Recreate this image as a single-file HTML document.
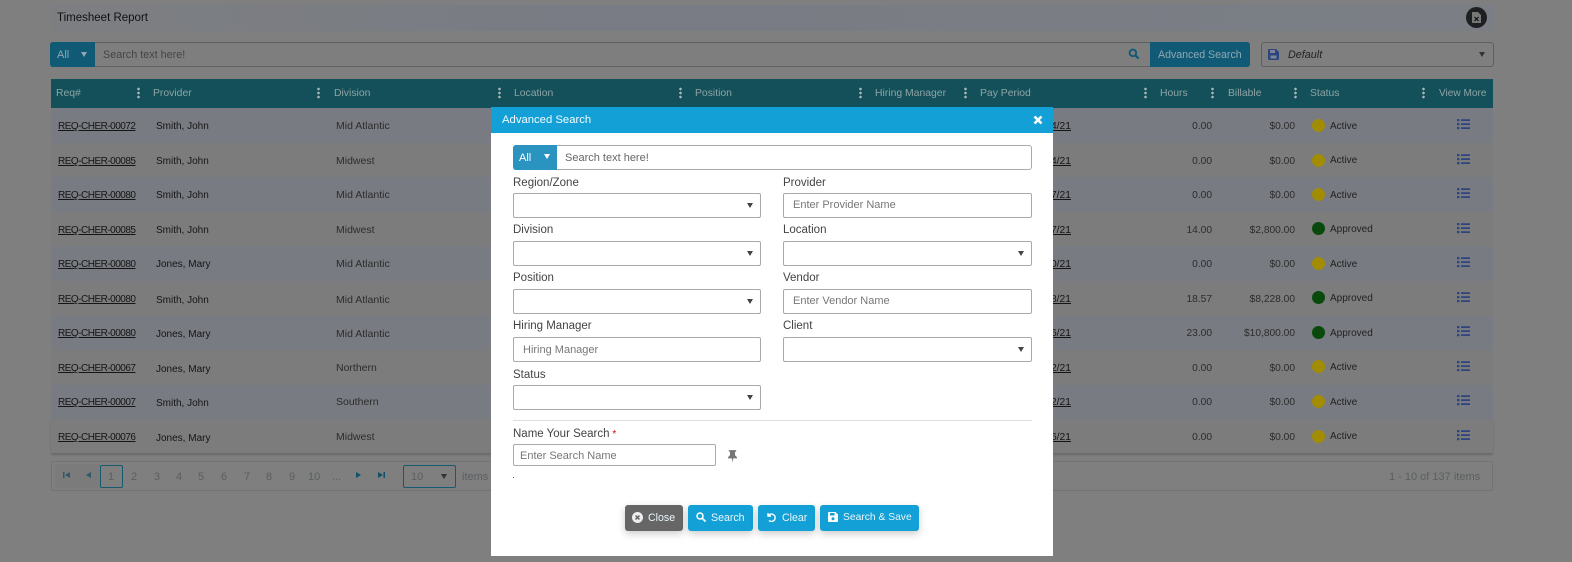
<!DOCTYPE html>
<html><head><meta charset="utf-8"><style>
html,body{margin:0;padding:0}
body{width:1572px;height:562px;position:relative;overflow:hidden;background:#7f7f7f;font-family:"Liberation Sans",sans-serif;font-size:10px;color:#111}
div,span,a,svg{position:absolute;box-sizing:border-box}
.t{white-space:nowrap;line-height:14px;margin-top:1px}
.row{left:51px;width:1442px;height:35px}
.h{color:#8ea4a6;font-size:10.4px;top:86px}
.d{width:3px;height:12px;top:87px;background:radial-gradient(circle,#a9baba 1.2px,transparent 1.4px) 0 0/3px 4px}
.r,.p,.v,.dt,.n,.b{margin-top:2px}
.r{text-decoration:underline;left:58px;letter-spacing:-.5px;color:#151515}
.p{left:156px;font-size:10px;color:#151515}
.v{left:336px;font-size:10.5px;color:#2c2c2c}
.dt{right:501px;text-decoration:underline;color:#151515;font-size:10.3px}
.n{right:360px;color:#2c2c2c;font-size:10.2px}
.b{right:277px;color:#2c2c2c;font-size:10.2px}
.c{left:1312px;width:13px;height:13px;border-radius:50%;background:#a28c03}
.g{background:#094a0c}
.s{left:1330px;font-size:10px;color:#222;margin-top:2px}
.l{left:1457px;width:13px;height:12px}
.lab{font-size:11.5px;color:#444}
.sel,.inp{background:#fff;border:1px solid #aaa;border-radius:2px;height:25px}
.sel{width:248px}
.sel:after{content:"";position:absolute;right:7px;top:9px;border-left:3.5px solid transparent;border-right:3.5px solid transparent;border-top:5px solid #444}
.ph{font-size:11px;color:#777;left:9px;top:5px;line-height:15px;white-space:nowrap}
.btn{top:505px;height:26px;border-radius:3px;background:#12a0d6;color:#e8f6fb;font-size:10.6px;line-height:26px;box-shadow:0 3px 8px rgba(0,0,0,.2);white-space:nowrap}
.pg{top:470px;color:#5a5f60;font-size:11px;line-height:14px}
</style></head><body>
<div style="left:51px;top:5px;width:1442px;height:26px;background:linear-gradient(90deg,#7c7e81,#797c84 40%,#7b7e85);"></div>
<div class="t" style="left:57px;top:10px;font-size:11.5px;color:#111">Timesheet Report</div>
<div style="left:1466px;top:7px;width:21px;height:21px;border-radius:50%;background:#1d1f20"></div>
<svg style="left:1472px;top:12px" width="9" height="11" viewBox="0 0 9 11"><path d="M0 0h6l3 3v8H0z" fill="#777"/><path d="M2.500 5l4 4M6.500 5l-4 4" stroke="#111" stroke-width="1.200"/></svg>

<div style="left:50px;top:42px;width:1200px;height:25px;border:1px solid #606060;border-radius:3px;background:#7e7e7e"></div>
<div style="left:50px;top:42px;width:45px;height:25px;background:#105a76;border-radius:3px 0 0 3px"></div>
<div class="t" style="left:57px;top:47px;font-size:11px;color:#8fa8b2">All</div>
<div style="left:81px;top:52px;border-left:3.5px solid transparent;border-right:3.5px solid transparent;border-top:5px solid #8fa8b2"></div>
<div class="t" style="left:103px;top:47px;font-size:10.8px;color:#454545">Search text here!</div>
<svg style="left:1128px;top:48px" width="12" height="12" viewBox="0 0 13 13"><circle cx="5.300" cy="5.300" r="3.600" fill="none" stroke="#105a76" stroke-width="2"/><path d="M8 8l3.400 3.400" stroke="#105a76" stroke-width="2.400"/></svg>
<div style="left:1150px;top:42px;width:100px;height:25px;background:#105a76;border-radius:0 3px 3px 0"></div>
<div class="t" style="left:1158px;top:47px;font-size:10.6px;color:#8fa8b2">Advanced Search</div>
<div style="left:1261px;top:42px;width:233px;height:25px;border:1px solid #5f5f5f;border-radius:3px"></div>
<svg style="left:1268px;top:49px" width="11" height="11" viewBox="0 0 11 11"><path d="M0 1.500A1.500 1.500 0 0 1 1.500 0H8l3 3v6.500A1.500 1.500 0 0 1 9.500 11h-8A1.500 1.500 0 0 1 0 9.500z" fill="#2c4580"/><rect x="2" y="1" width="5" height="3" fill="#7f8595"/><rect x="2.500" y="6.500" width="6" height="3" fill="#7f8595"/></svg>
<div class="t" style="left:1288px;top:47px;font-size:10.8px;font-style:italic;color:#222">Default</div>
<div style="left:1479px;top:52px;border-left:3.5px solid transparent;border-right:3.5px solid transparent;border-top:5px solid #333"></div>

<div style="left:51px;top:79px;width:1442px;height:29px;background:#145059"></div>
<div class="t h" style="left:56px">Req#</div><div class="d" style="left:137px"></div>
<div class="t h" style="left:153px">Provider</div><div class="d" style="left:317px"></div>
<div class="t h" style="left:334px">Division</div><div class="d" style="left:498px"></div>
<div class="t h" style="left:514px">Location</div><div class="d" style="left:679px"></div>
<div class="t h" style="left:695px">Position</div><div class="d" style="left:859px"></div>
<div class="t h" style="left:875px">Hiring Manager</div><div class="d" style="left:964px"></div>
<div class="t h" style="left:980px">Pay Period</div><div class="d" style="left:1144px"></div>
<div class="t h" style="left:1160px">Hours</div><div class="d" style="left:1211px"></div>
<div class="t h" style="left:1228px">Billable</div><div class="d" style="left:1294px"></div>
<div class="t h" style="left:1310px">Status</div><div class="d" style="left:1422px"></div>
<div class="t h" style="left:1439px;font-size:10.100px">View More</div>

<div class="row" style="top:108px;background:#797b82"></div>
<div class="row" style="top:143px;background:#7c7c7c"></div>
<div class="row" style="top:177px;background:#797b82"></div>
<div class="row" style="top:212px;background:#7c7c7c"></div>
<div class="row" style="top:246px;background:#797b82"></div>
<div class="row" style="top:281px;background:#7c7c7c"></div>
<div class="row" style="top:316px;background:#797b82"></div>
<div class="row" style="top:350px;background:#7c7c7c"></div>
<div class="row" style="top:385px;background:#797b82"></div>
<div class="row" style="top:419px;height:34px;background:#7c7c7c;box-shadow:0 2px 2px rgba(0,0,0,.18)"></div>

<a class="t r" style="top:118px">REQ-CHER-00072</a><span class="t p" style="top:118px">Smith, John</span><span class="t v" style="top:117px">Mid Atlantic</span><span class="t dt" style="top:118px">4/21</span><span class="t n" style="top:118px">0.00</span><span class="t b" style="top:118px">$0.00</span><span class="c" style="top:119px"></span><span class="t s" style="top:118px">Active</span>
<a class="t r" style="top:153px">REQ-CHER-00085</a><span class="t p" style="top:153px">Smith, John</span><span class="t v" style="top:152px">Midwest</span><span class="t dt" style="top:153px">4/21</span><span class="t n" style="top:153px">0.00</span><span class="t b" style="top:153px">$0.00</span><span class="c" style="top:154px"></span><span class="t s" style="top:152px">Active</span>
<a class="t r" style="top:187px">REQ-CHER-00080</a><span class="t p" style="top:187px">Smith, John</span><span class="t v" style="top:186px">Mid Atlantic</span><span class="t dt" style="top:187px">7/21</span><span class="t n" style="top:187px">0.00</span><span class="t b" style="top:187px">$0.00</span><span class="c" style="top:188px"></span><span class="t s" style="top:187px">Active</span>
<a class="t r" style="top:222px">REQ-CHER-00085</a><span class="t p" style="top:222px">Smith, John</span><span class="t v" style="top:221px">Midwest</span><span class="t dt" style="top:222px">7/21</span><span class="t n" style="top:222px">14.00</span><span class="t b" style="top:222px">$2,800.00</span><span class="c g" style="top:222px"></span><span class="t s" style="top:221px">Approved</span>
<a class="t r" style="top:256px">REQ-CHER-00080</a><span class="t p" style="top:256px">Jones, Mary</span><span class="t v" style="top:255px">Mid Atlantic</span><span class="t dt" style="top:256px">0/21</span><span class="t n" style="top:256px">0.00</span><span class="t b" style="top:256px">$0.00</span><span class="c" style="top:257px"></span><span class="t s" style="top:256px">Active</span>
<a class="t r" style="top:291px">REQ-CHER-00080</a><span class="t p" style="top:292px">Smith, John</span><span class="t v" style="top:291px">Mid Atlantic</span><span class="t dt" style="top:291px">8/21</span><span class="t n" style="top:291px">18.57</span><span class="t b" style="top:291px">$8,228.00</span><span class="c g" style="top:291px"></span><span class="t s" style="top:290px">Approved</span>
<a class="t r" style="top:325px">REQ-CHER-00080</a><span class="t p" style="top:326px">Jones, Mary</span><span class="t v" style="top:325px">Mid Atlantic</span><span class="t dt" style="top:325px">6/21</span><span class="t n" style="top:325px">23.00</span><span class="t b" style="top:325px">$10,800.00</span><span class="c g" style="top:326px"></span><span class="t s" style="top:325px">Approved</span>
<a class="t r" style="top:360px">REQ-CHER-00067</a><span class="t p" style="top:361px">Jones, Mary</span><span class="t v" style="top:359px">Northern</span><span class="t dt" style="top:360px">2/21</span><span class="t n" style="top:360px">0.00</span><span class="t b" style="top:360px">$0.00</span><span class="c" style="top:360px"></span><span class="t s" style="top:359px">Active</span>
<a class="t r" style="top:394px">REQ-CHER-00007</a><span class="t p" style="top:395px">Smith, John</span><span class="t v" style="top:393px">Southern</span><span class="t dt" style="top:394px">2/21</span><span class="t n" style="top:394px">0.00</span><span class="t b" style="top:394px">$0.00</span><span class="c" style="top:395px"></span><span class="t s" style="top:394px">Active</span>
<a class="t r" style="top:429px">REQ-CHER-00076</a><span class="t p" style="top:430px">Jones, Mary</span><span class="t v" style="top:428px">Midwest</span><span class="t dt" style="top:429px">6/21</span><span class="t n" style="top:429px">0.00</span><span class="t b" style="top:429px">$0.00</span><span class="c" style="top:430px"></span><span class="t s" style="top:428px">Active</span>

<svg class="l" style="top:118px" viewBox="0 0 13 12"><path d="M0 1h2.400v2.200H0zM0 5h2.400v2.200H0zM0 9h2.400v2.200H0zM4 1.200h9v1.800H4zM4 5.200h9v1.800H4zM4 9.200h9v1.800H4z" fill="#2c4580"/></svg>
<svg class="l" style="top:153px" viewBox="0 0 13 12"><path d="M0 1h2.400v2.200H0zM0 5h2.400v2.200H0zM0 9h2.400v2.200H0zM4 1.200h9v1.800H4zM4 5.200h9v1.800H4zM4 9.200h9v1.800H4z" fill="#2c4580"/></svg>
<svg class="l" style="top:187px" viewBox="0 0 13 12"><path d="M0 1h2.400v2.200H0zM0 5h2.400v2.200H0zM0 9h2.400v2.200H0zM4 1.200h9v1.800H4zM4 5.200h9v1.800H4zM4 9.200h9v1.800H4z" fill="#2c4580"/></svg>
<svg class="l" style="top:222px" viewBox="0 0 13 12"><path d="M0 1h2.400v2.200H0zM0 5h2.400v2.200H0zM0 9h2.400v2.200H0zM4 1.200h9v1.800H4zM4 5.200h9v1.800H4zM4 9.200h9v1.800H4z" fill="#2c4580"/></svg>
<svg class="l" style="top:256px" viewBox="0 0 13 12"><path d="M0 1h2.400v2.200H0zM0 5h2.400v2.200H0zM0 9h2.400v2.200H0zM4 1.200h9v1.800H4zM4 5.200h9v1.800H4zM4 9.200h9v1.800H4z" fill="#2c4580"/></svg>
<svg class="l" style="top:291px" viewBox="0 0 13 12"><path d="M0 1h2.400v2.200H0zM0 5h2.400v2.200H0zM0 9h2.400v2.200H0zM4 1.200h9v1.800H4zM4 5.200h9v1.800H4zM4 9.200h9v1.800H4z" fill="#2c4580"/></svg>
<svg class="l" style="top:325px" viewBox="0 0 13 12"><path d="M0 1h2.400v2.200H0zM0 5h2.400v2.200H0zM0 9h2.400v2.200H0zM4 1.200h9v1.800H4zM4 5.200h9v1.800H4zM4 9.200h9v1.800H4z" fill="#2c4580"/></svg>
<svg class="l" style="top:360px" viewBox="0 0 13 12"><path d="M0 1h2.400v2.200H0zM0 5h2.400v2.200H0zM0 9h2.400v2.200H0zM4 1.200h9v1.800H4zM4 5.200h9v1.800H4zM4 9.200h9v1.800H4z" fill="#2c4580"/></svg>
<svg class="l" style="top:394px" viewBox="0 0 13 12"><path d="M0 1h2.400v2.200H0zM0 5h2.400v2.200H0zM0 9h2.400v2.200H0zM4 1.200h9v1.800H4zM4 5.200h9v1.800H4zM4 9.200h9v1.800H4z" fill="#2c4580"/></svg>
<svg class="l" style="top:429px" viewBox="0 0 13 12"><path d="M0 1h2.400v2.200H0zM0 5h2.400v2.200H0zM0 9h2.400v2.200H0zM4 1.200h9v1.800H4zM4 5.200h9v1.800H4zM4 9.200h9v1.800H4z" fill="#2c4580"/></svg>

<div style="left:51px;top:461px;width:1442px;height:30px;border:1px solid #737373;border-radius:2px"></div>
<div style="left:55px;top:464px;width:45px;height:24px;background:#7b7b7b"></div>
<div style="left:100px;top:465px;width:23px;height:23px;border:1px solid #155a70;border-radius:2px"></div>
<svg style="left:63px;top:472px" width="7" height="6"><path d="M0 0h1.500v6H0zM7 0v6L2 3z" fill="#2f5a6a"/></svg>
<svg style="left:86px;top:472px" width="5" height="6"><path d="M5 0v6L0 3z" fill="#2f5a6a"/></svg>
<span class="pg" style="left:108px">1</span>
<span class="pg" style="left:131px">2</span><span class="pg" style="left:154px">3</span><span class="pg" style="left:176px">4</span><span class="pg" style="left:198px">5</span><span class="pg" style="left:221px">6</span><span class="pg" style="left:244px">7</span><span class="pg" style="left:266px">8</span><span class="pg" style="left:289px">9</span><span class="pg" style="left:308px">10</span><span class="pg" style="left:332px">...</span>
<svg style="left:356px;top:472px" width="5" height="6"><path d="M0 0v6l5-3z" fill="#14506a"/></svg>
<svg style="left:378px;top:472px" width="7" height="6"><path d="M0 0v6l5-3zM5.500 0H7v6H5.500z" fill="#14506a"/></svg>
<div style="left:403px;top:465px;width:53px;height:23px;border:1px solid #155a70;border-radius:2px"></div>
<span class="pg" style="left:411px">10</span>
<div style="left:441px;top:474px;border-left:3.5px solid transparent;border-right:3.5px solid transparent;border-top:5px solid #333"></div>
<span class="pg" style="left:462px">items</span>
<span class="pg" style="left:1389px">1 - 10 of 137 items</span>

<!-- modal -->
<div style="left:491px;top:107px;width:562px;height:449px;background:#fff;z-index:2">
<div style="left:0;top:0;width:562px;height:26px;background:#12a0d6"></div>
<div class="t" style="left:11px;top:5px;font-size:11.300px;color:#f2fbff">Advanced Search</div>
<svg style="left:542px;top:8px" width="10" height="10" viewBox="0 0 10 10"><path d="M1.500 1.500l7 7M8.500 1.500l-7 7" stroke="#fff" stroke-width="2.600"/></svg>
<div style="left:22px;top:38px;width:519px;height:25px;border:1px solid #aaa;border-radius:3px"></div>
<div style="left:22px;top:38px;width:44px;height:25px;background:#2b93c0;border-radius:3px 0 0 3px"></div>
<div class="t" style="left:28px;top:43px;font-size:11px;color:#fff">All</div>
<div style="left:53px;top:47px;border-left:3.5px solid transparent;border-right:3.5px solid transparent;border-top:5px solid #fff"></div>
<div class="t" style="left:74px;top:43px;font-size:11px;color:#666">Search text here!</div>
<div class="t lab" style="left:22px;top:68px">Region/Zone</div>
<div class="sel" style="left:22px;top:86px"></div>
<div class="t lab" style="left:292px;top:68px">Provider</div>
<div class="inp" style="left:292px;top:86px;width:249px"><span class="ph" style="top:4px">Enter Provider Name</span></div>
<div class="t lab" style="left:22px;top:115px">Division</div>
<div class="sel" style="left:22px;top:134px"></div>
<div class="t lab" style="left:292px;top:115px">Location</div>
<div class="sel" style="left:292px;top:134px;width:249px"></div>
<div class="t lab" style="left:22px;top:163px">Position</div>
<div class="sel" style="left:22px;top:182px"></div>
<div class="t lab" style="left:292px;top:163px">Vendor</div>
<div class="inp" style="left:292px;top:182px;width:249px"><span class="ph" style="top:4px">Enter Vendor Name</span></div>
<div class="t lab" style="left:22px;top:211px">Hiring Manager</div>
<div class="inp" style="left:22px;top:230px;width:248px"><span class="ph">Hiring Manager</span></div>
<div class="t lab" style="left:292px;top:211px">Client</div>
<div class="sel" style="left:292px;top:230px;width:249px"></div>
<div class="t lab" style="left:22px;top:260px">Status</div>
<div class="sel" style="left:22px;top:278px"></div>
<div style="left:22px;top:313px;width:519px;height:1px;background:#ddd"></div>
<div class="t lab" style="left:22px;top:319px">Name Your Search<span style="position:static;color:#d00;font-size:10px"> *</span></div>
<div class="inp" style="left:22px;top:337px;width:203px;height:22px"><span class="ph" style="left:6px;top:4px">Enter Search Name</span></div>
<svg style="left:236px;top:343px" width="11" height="13" viewBox="0 0 12 14"><path d="M2 0h8v1.500L8.700 2v3.500L11 8v1H6.700L6 14l-.7-5H1V8l2.300-2.500V2L2 1.500z" fill="#777"/></svg>
<div style="left:22px;top:370px;width:1px;height:1px;background:#c33"></div>
</div>
<div class="btn" style="left:625px;width:58px;background:#666;z-index:3"><svg style="left:7px;top:7px" width="11" height="11" viewBox="0 0 10 10"><circle cx="5" cy="5" r="5" fill="#eee"/><path d="M3.200 3.200l3.600 3.600M6.800 3.200L3.200 6.800" stroke="#666" stroke-width="1.400"/></svg><span style="left:23px">Close</span></div>
<div class="btn" style="left:688px;width:65px;z-index:3"><svg style="left:8px;top:7px" width="10" height="10" viewBox="0 0 10 10"><circle cx="4" cy="4" r="3" fill="none" stroke="#fff" stroke-width="1.500"/><path d="M6.200 6.200L9.500 9.500" stroke="#fff" stroke-width="1.800"/></svg><span style="left:23px">Search</span></div>
<div class="btn" style="left:758px;width:57px;z-index:3"><svg style="left:8px;top:7px" width="10" height="10" viewBox="0 0 10 10"><path d="M2 1v3h3M2.300 3.800A3.700 3.700 0 1 1 3 8.500" fill="none" stroke="#fff" stroke-width="1.400"/></svg><span style="left:24px">Clear</span></div>
<div class="btn" style="left:820px;width:99px;z-index:3"><svg style="left:8px;top:7px" width="10" height="10" viewBox="0 0 10 10"><path d="M0 1a1 1 0 0 1 1-1h6.500L10 2.500V9a1 1 0 0 1-1 1H1a1 1 0 0 1-1-1z" fill="#fff"/><rect x="2" y="1" width="4.500" height="2.500" fill="#12a0d6"/><circle cx="5" cy="6.800" r="1.500" fill="#12a0d6"/></svg><span style="left:23px;font-size:10.300px">Search &amp; Save</span></div>
</body></html>
